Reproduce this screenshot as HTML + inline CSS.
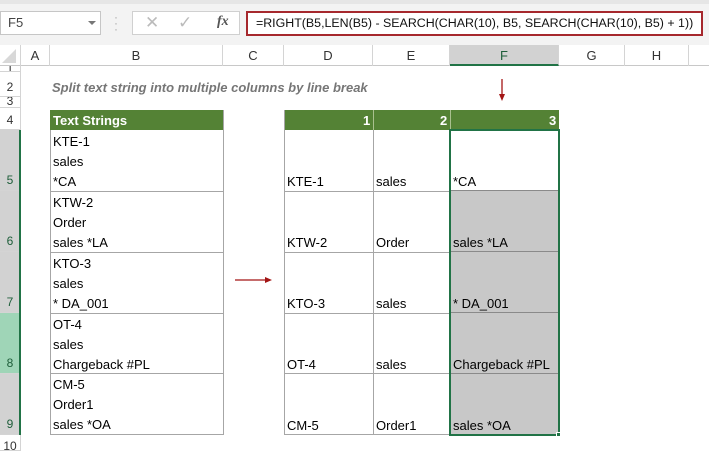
<!DOCTYPE html>
<html><head><meta charset="utf-8"><style>
*{margin:0;padding:0;box-sizing:border-box}
body{width:709px;height:451px;overflow:hidden;background:#fff;font-family:"Liberation Sans",sans-serif;position:relative}
.a{position:absolute}
.t{position:absolute;font-size:13px;color:#000;white-space:nowrap}
.ch{position:absolute;top:45px;height:21px;font-size:13px;color:#333;text-align:center;line-height:21px;border-right:1px solid #d4d4d4}
.rh{position:absolute;left:0;width:20px;font-size:12px;color:#333;text-align:center;border-bottom:1px solid #d4d4d4}
.hl{position:absolute;height:1px;background:#a6a6a6}
.vl{position:absolute;width:1px;background:#a6a6a6}
</style></head><body>
<div class="a" style="left:0;top:0;width:709px;height:45px;background:#f3f3f3"></div>
<div class="a" style="left:0;top:0;width:709px;height:4px;background:#e6e6e6"></div>
<div class="a" style="left:0;top:11px;width:101px;height:24px;background:#fff;border:1px solid #c6c6c6"></div>
<div class="t" style="left:8px;top:15px;font-size:13px;color:#444">F5</div>
<div class="a" style="left:88px;top:21px;width:0;height:0;border-left:4px solid transparent;border-right:4px solid transparent;border-top:4px solid #777"></div>
<div class="t" style="left:114px;top:14px;color:#aaa;font-size:12px;line-height:6px">·<br>·<br>·</div>
<div class="a" style="left:132px;top:11px;width:108px;height:24px;background:#fff;border:1px solid #d0d0d0"></div>
<div class="t" style="left:145px;top:13px;color:#bbb;font-size:17px">✕</div>
<div class="t" style="left:178px;top:13px;color:#bbb;font-size:17px">✓</div>
<div class="t" style="left:217px;top:14px;color:#555;font-size:14px;font-style:italic;font-family:'Liberation Serif',serif"><b>fx</b></div>
<div class="a" style="left:246px;top:11px;width:457px;height:25px;background:#fff;border:2px solid #a6282d"></div>
<div class="t" style="left:256px;top:16px;font-size:12.4px;color:#111">=RIGHT(B5,LEN(B5) - SEARCH(CHAR(10), B5, SEARCH(CHAR(10), B5) + 1))</div>
<div class="a" style="left:0;top:45px;width:709px;height:21px;background:#fff;border-bottom:1px solid #c8c8c8"></div>
<div class="a" style="left:2px;top:49px;width:0;height:0;border-left:14px solid transparent;border-bottom:14px solid #d8d8d8"></div>
<div class="ch" style="left:0;width:21px"></div>
<div class="ch" style="left:21px;width:29px">A</div>
<div class="ch" style="left:50px;width:173px">B</div>
<div class="ch" style="left:223px;width:61px">C</div>
<div class="ch" style="left:284px;width:89px">D</div>
<div class="ch" style="left:373px;width:77px">E</div>
<div class="ch" style="left:450px;width:109px;background:#d2d2d2;border-bottom:2px solid #217346;color:#1e5e3a">F</div>
<div class="ch" style="left:559px;width:66px">G</div>
<div class="ch" style="left:625px;width:64px">H</div>
<div class="a" style="left:20px;top:66px;width:1px;height:385px;background:#d4d4d4"></div>
<div class="rh" style="top:66px;height:6px;line-height:4px;overflow:hidden">1</div>
<div class="rh" style="top:72px;height:25px;line-height:30px">2</div>
<div class="rh" style="top:97px;height:11px;line-height:8px;overflow:hidden">3</div>
<div class="rh" style="top:108px;height:22px;line-height:24px">4</div>
<div class="rh" style="top:130px;height:61px;line-height:100px;background:#d2d2d2;color:#1e5e3a">5</div>
<div class="rh" style="top:191px;height:61px;line-height:100px;background:#d2d2d2;color:#1e5e3a">6</div>
<div class="rh" style="top:252px;height:61px;line-height:100px;background:#d2d2d2;color:#1e5e3a">7</div>
<div class="rh" style="top:313px;height:61px;line-height:100px;background:#9fd5b7;color:#1e5e3a">8</div>
<div class="rh" style="top:374px;height:61px;line-height:100px;background:#d2d2d2;color:#1e5e3a">9</div>
<div class="rh" style="top:435px;height:16px;line-height:22px">10</div>
<div class="a" style="left:19px;top:130px;width:2px;height:305px;background:#217346"></div>
<div class="t" style="left:52px;top:80px;font-size:13px;font-style:italic;font-weight:bold;color:#767676">Split text string into multiple columns by line break</div>
<div class="a" style="left:50px;top:110px;width:173px;height:20px;background:#548235"></div>
<div class="t" style="left:53px;top:113px;color:#fff;font-weight:bold">Text Strings</div>
<div class="a" style="left:284px;top:110px;width:275px;height:20px;background:#548235"></div>
<div class="vl" style="left:373px;top:110px;height:20px;background:#a9c08f"></div>
<div class="vl" style="left:450px;top:110px;height:20px;background:#a9c08f"></div>
<div class="t" style="left:363px;top:113px;color:#fff;font-weight:bold">1</div>
<div class="t" style="left:440px;top:113px;color:#fff;font-weight:bold">2</div>
<div class="t" style="left:549px;top:113px;color:#fff;font-weight:bold">3</div>
<div class="a" style="left:451px;top:191px;width:107px;height:243px;background:#c8c8c8"></div>
<div class="vl" style="left:50px;top:130px;height:305px"></div>
<div class="vl" style="left:223px;top:110px;height:325px"></div>
<div class="vl" style="left:284px;top:110px;height:325px"></div>
<div class="vl" style="left:373px;top:130px;height:305px"></div>
<div class="hl" style="left:50px;top:191px;width:173px"></div>
<div class="hl" style="left:50px;top:252px;width:173px"></div>
<div class="hl" style="left:50px;top:313px;width:173px"></div>
<div class="hl" style="left:50px;top:373px;width:173px"></div>
<div class="hl" style="left:50px;top:434px;width:173px"></div>
<div class="hl" style="left:284px;top:191px;width:166px"></div>
<div class="hl" style="left:284px;top:252px;width:166px"></div>
<div class="hl" style="left:284px;top:313px;width:166px"></div>
<div class="hl" style="left:284px;top:373px;width:166px"></div>
<div class="hl" style="left:284px;top:434px;width:166px"></div>
<div class="hl" style="left:451px;top:190px;width:107px;background:#8a8a8a"></div>
<div class="hl" style="left:451px;top:251px;width:107px;background:#8a8a8a"></div>
<div class="hl" style="left:451px;top:312px;width:107px;background:#8a8a8a"></div>
<div class="hl" style="left:451px;top:373px;width:107px;background:#8a8a8a"></div>
<div class="a" style="left:449px;top:129px;width:111px;height:307px;border:2px solid #217346"></div>
<div class="a" style="left:556px;top:432px;width:5px;height:5px;background:#217346;border:1px solid #fff"></div>
<div class="t" style="left:53px;top:132px;line-height:20px">KTE-1<br>sales<br>*CA</div>
<div class="t" style="left:53px;top:193px;line-height:20px">KTW-2<br>Order<br>sales *LA</div>
<div class="t" style="left:53px;top:254px;line-height:20px">KTO-3<br>sales<br>* DA_001</div>
<div class="t" style="left:53px;top:315px;line-height:20px">OT-4<br>sales<br>Chargeback #PL</div>
<div class="t" style="left:53px;top:375px;line-height:20px">CM-5<br>Order1<br>sales *OA</div>
<div class="t" style="left:287px;top:174px">KTE-1</div><div class="t" style="left:376px;top:174px">sales</div><div class="t" style="left:453px;top:174px">*CA</div>
<div class="t" style="left:287px;top:235px">KTW-2</div><div class="t" style="left:376px;top:235px">Order</div><div class="t" style="left:453px;top:235px">sales *LA</div>
<div class="t" style="left:287px;top:296px">KTO-3</div><div class="t" style="left:376px;top:296px">sales</div><div class="t" style="left:453px;top:296px">* DA_001</div>
<div class="t" style="left:287px;top:357px">OT-4</div><div class="t" style="left:376px;top:357px">sales</div><div class="t" style="left:453px;top:357px">Chargeback #PL</div>
<div class="t" style="left:287px;top:418px">CM-5</div><div class="t" style="left:376px;top:418px">Order1</div><div class="t" style="left:453px;top:418px">sales *OA</div>
<svg class="a" style="left:0;top:0" width="709" height="451">
<line x1="235" y1="280" x2="266" y2="280" stroke="#a31515" stroke-width="1.3"/>
<polygon points="265,277 272,280 265,283" fill="#a31515"/>
<line x1="502" y1="79" x2="502" y2="95" stroke="#a31515" stroke-width="1.3"/>
<polygon points="499,94 502,101 505,94" fill="#a31515"/>
</svg>
</body></html>
